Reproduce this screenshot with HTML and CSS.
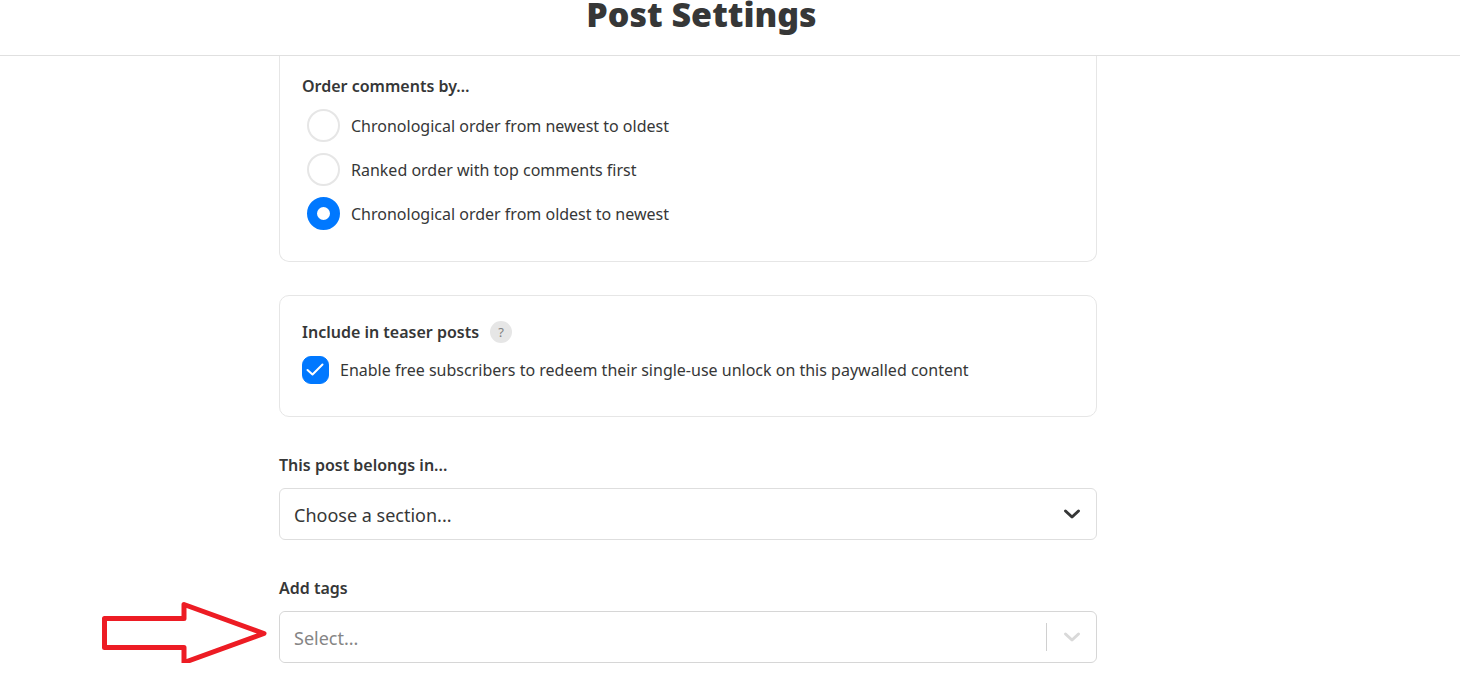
FILE: index.html
```html
<!DOCTYPE html>
<html lang="en">
<head>
  <meta charset="UTF-8">
  <meta name="viewport" content="width=device-width, initial-scale=1.0">
  <title>Post Settings</title>
  <link rel="stylesheet" href="styles.css">
</head>
<body>
  <header class="page-header">
    <h1>Post Settings</h1>
  </header>

  <main class="page">
    <form class="settings">
      <div class="card card-top" role="radiogroup" aria-labelledby="order-title">
        <h2 class="title" id="order-title">Order comments by…</h2>
        <div class="options">
          <label class="option">
            <input class="radio" type="radio" name="order" value="newest">
            <span>Chronological order from newest to oldest</span>
          </label>
          <label class="option">
            <input class="radio" type="radio" name="order" value="top">
            <span>Ranked order with top comments first</span>
          </label>
          <label class="option">
            <input class="radio" type="radio" name="order" value="oldest" checked>
            <span>Chronological order from oldest to newest</span>
          </label>
        </div>
      </div>

      <div class="card">
        <div class="title-row">
          <h2 class="title">Include in teaser posts</h2>
          <button class="help" type="button" aria-label="Help">?</button>
        </div>
        <label class="check-row">
          <span class="check-box">
            <input class="checkbox" type="checkbox" name="unlock" checked>
            <svg class="check-icon" viewBox="0 0 27 28" fill="none" stroke="#fff" stroke-width="2" stroke-linecap="round" stroke-linejoin="round"><path d="M5.500 14 L10.500 18.500 L20.500 8.500"/></svg>
          </span>
          <span>Enable free subscribers to redeem their single-use unlock on this paywalled content</span>
        </label>
      </div>

      <div class="field">
        <label class="title" for="section">This post belongs in...</label>
        <div class="control">
          <select class="input" id="section">
            <option>Choose a section...</option>
          </select>
          <svg class="chevron" viewBox="0 0 20 20"><path d="M3.500 7 L10 13 L16.500 7"/></svg>
        </div>
      </div>

      <div class="field">
        <label class="title" for="tags">Add tags</label>
        <div class="control control-tags">
          <input class="input" id="tags" type="text" placeholder="Select...">
          <span class="separator"></span>
          <button class="toggle" type="button" aria-label="Show tags">
            <svg class="chevron chevron-light" viewBox="0 0 20 20"><path d="M3.500 7 L10 13 L16.500 7"/></svg>
          </button>
          <svg class="arrow" viewBox="0 0 166 66" fill="none" stroke="#ed1c24" stroke-width="5" stroke-linejoin="round"><path d="M3.500 17.500 H83 V3.500 L163 32.500 L83 61.500 V46.500 H3.500 Z"/></svg>
        </div>
      </div>
    </form>
  </main>
</body>
</html>
```

FILE: styles.css
```css
* {
  box-sizing: border-box;
}
body {
  margin: 0;
  font-family: "Segoe UI", "Noto Sans", "Open Sans", sans-serif;
  font-size: 16px;
  line-height: 24px;
  color: #363737;
  background: #fff;
}
.page-header {
  padding: 0 57px 27px 0;
  border-bottom: 1px solid #e0e0e0;
  text-align: center;
}
.page-header h1 {
  margin: 0;
  font-size: 34px;
  line-height: 28px;
  font-weight: 900;
}
.page {
  padding-right: 84px;
}
.settings {
  max-width: 818px;
  margin: 0 auto;
}
.card {
  padding: 24px 22px 32px;
  margin-bottom: 33px;
  border: 1px solid #e6e6e6;
  border-radius: 10px;
}
.card-top {
  padding-top: 18px;
  padding-bottom: 31px;
  border-top: none;
  border-radius: 0 0 10px 10px;
}
.title {
  display: block;
  margin: 0;
  font-size: 16px;
  line-height: 24px;
  font-weight: 600;
}
.options {
  display: flex;
  flex-direction: column;
  gap: 11px;
  margin: 11px 0 0 5px;
}
.option {
  display: flex;
  align-items: center;
  gap: 11px;
}
.radio {
  appearance: none;
  flex: none;
  width: 33px;
  height: 33px;
  margin: 0;
  border: 2px solid #e6e6e6;
  border-radius: 50%;
  background: #fff;
}
.radio:checked {
  border: 10px solid #0078ff;
}
.title-row {
  display: flex;
  align-items: center;
  gap: 11px;
}
.help {
  width: 22px;
  height: 22px;
  padding: 0;
  border: none;
  border-radius: 50%;
  background: #e6e6e6;
  color: #808080;
  font: inherit;
  font-size: 13px;
  line-height: 22px;
}
.check-row {
  display: flex;
  align-items: center;
  gap: 11px;
  margin-top: 12px;
}
.check-box {
  position: relative;
  flex: none;
  width: 27px;
  height: 28px;
}
.checkbox {
  appearance: none;
  display: block;
  width: 100%;
  height: 100%;
  margin: 0;
  border: 1px solid #e6e6e6;
  border-radius: 9px;
}
.checkbox:checked {
  border-color: #0078ff;
  background: #0078ff;
}
.check-icon {
  position: absolute;
  inset: 0;
  pointer-events: none;
}
.field {
  margin-top: 36px;
}
.control {
  position: relative;
  margin-top: 11px;
}
.input {
  appearance: none;
  display: block;
  width: 100%;
  height: 52px;
  padding: 2px 14px 0;
  border: 1px solid #dedede;
  border-radius: 6px;
  background: #fff;
  color: #363737;
  font: inherit;
  font-size: 18px;
}
.chevron {
  position: absolute;
  top: 16px;
  right: 15px;
  width: 20px;
  height: 20px;
  fill: none;
  stroke: #363737;
  stroke-width: 3;
  stroke-linecap: round;
  stroke-linejoin: round;
  pointer-events: none;
}
.chevron-light {
  position: static;
  display: block;
  stroke: #d9d9d9;
}
.control-tags {
  display: flex;
  align-items: center;
  border: 1px solid #d6d6d6;
  border-radius: 6px;
}
.control-tags .input {
  flex: 1;
  height: 50px;
  border: none;
}
.input::placeholder {
  color: #858585;
  opacity: 1;
}
.separator {
  width: 1px;
  height: 28px;
  background: #d0d0d0;
}
.toggle {
  padding: 15px 14px 15px 15px;
  border: none;
  background: none;
}
/* arrow pointing at the tags field */
.arrow {
  position: absolute;
  top: -11px;
  right: 100%;
  width: 166px;
  height: 66px;
  margin-right: 13px;
}
```
